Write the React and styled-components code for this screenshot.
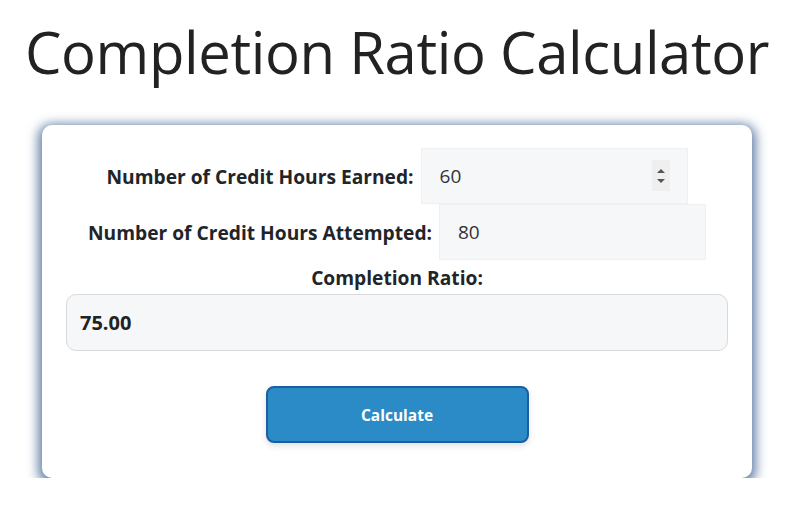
import styled, { createGlobalStyle } from "styled-components";

const GlobalStyle = createGlobalStyle`
  body {
    margin: 0;
    background: #ffffff;
    font-family: "Open Sans", "Noto Sans", sans-serif;
    color: #212529;
  }
`;

const Page = styled.div`
  display: flex;
  flex-direction: column;
  align-items: center;
  padding-right: 5px;
`;

const Title = styled.h1`
  margin: 12px 0 0;
  font-size: 58px;
  font-weight: 400;
  line-height: 80px;
  color: #222;
  letter-spacing: -0.4px;
`;

const Card = styled.div`
  width: 710px;
  box-sizing: border-box;
  margin-top: 33px;
  padding: 23px 24px 35px;
  background: #fff;
  border-radius: 10px;
  box-shadow: 0 3px 11px 4px rgba(45, 85, 135, 0.72);
  display: flex;
  flex-direction: column;
  align-items: center;
`;

const Row = styled.div`
  display: flex;
  align-items: center;
  gap: 7px;
`;

const Label = styled.label`
  font-size: 19.2px;
  font-weight: 700;
  color: #212529;
`;

const InputWrap = styled.div`
  position: relative;
  width: 267px;
  height: 56px;
`;

const Input = styled.input`
  width: 100%;
  height: 100%;
  box-sizing: border-box;
  border: 1px solid #f0f0f2;
  background: #f6f7f9;
  padding: 0 18px;
  font-family: inherit;
  font-size: 19px;
  color: #333;
  outline: none;
`;

const Spinner = styled.div`
  position: absolute;
  right: 18px;
  top: 12px;
  width: 18px;
  height: 31px;
  background: #efefef;
  display: flex;
  align-items: center;
  justify-content: center;
`;

const RatioLabel = styled(Label)`
  margin-top: 4px;
`;

const Output = styled.div`
  align-self: stretch;
  margin-top: 3px;
  height: 57px;
  box-sizing: border-box;
  border: 1px solid #d9d9dc;
  border-radius: 10px;
  background: #f6f7f9;
  padding: 0 13px;
  display: flex;
  align-items: center;
  font-size: 20px;
  font-weight: 700;
  color: #222;
`;

const Button = styled.button`
  margin-top: 35px;
  width: 263px;
  height: 57px;
  background: #2a8bc6;
  border: 2px solid #1b5ea3;
  border-radius: 8px;
  color: #fff;
  font-family: inherit;
  font-size: 15.5px;
  font-weight: 700;
  box-shadow: 0 3px 6px rgba(0, 0, 0, 0.12);
  cursor: pointer;
`;

export default function App() {
  return (
    <Page>
      <GlobalStyle />
      <Title>Completion Ratio Calculator</Title>
      <Card>
        <Row>
          <Label>Number of Credit Hours Earned:</Label>
          <InputWrap>
            <Input type="text" defaultValue="60" />
            <Spinner>
              <svg width="10" height="16" viewBox="0 0 10 16">
                <path d="M1 5 L5 1 L9 5 Z" fill="#555" />
                <path d="M1 11 L5 15 L9 11 Z" fill="#555" />
              </svg>
            </Spinner>
          </InputWrap>
        </Row>
        <Row>
          <Label>Number of Credit Hours Attempted:</Label>
          <InputWrap>
            <Input type="text" defaultValue="80" />
          </InputWrap>
        </Row>
        <RatioLabel>Completion Ratio:</RatioLabel>
        <Output>75.00</Output>
        <Button>Calculate</Button>
      </Card>
    </Page>
  );
}
